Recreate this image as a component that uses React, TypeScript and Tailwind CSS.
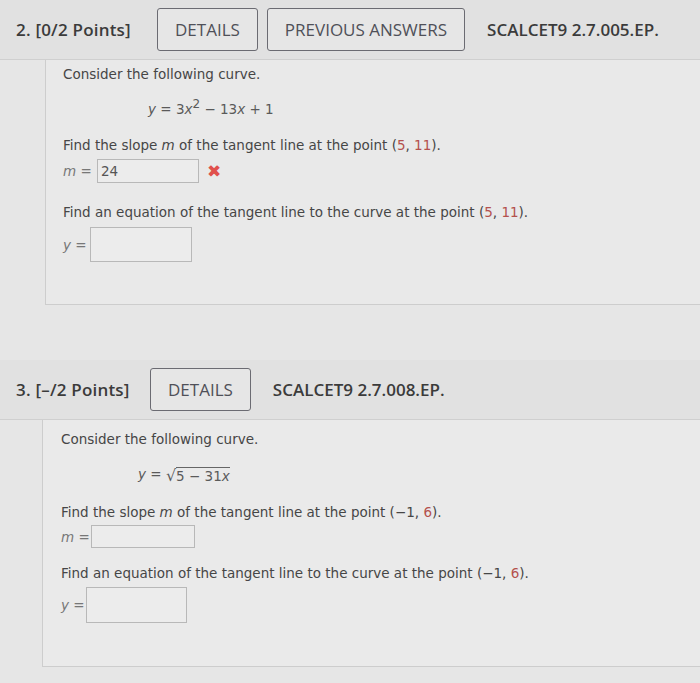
import React from "react";

const bodyFont = { fontFamily: '"DejaVu Sans", Verdana, sans-serif' };

function Pt({ a, b }: { a: string; b: string }) {
  return (
    <span>
      (<span className="text-[#b4514d]">{a}</span>, <span className="text-[#b4514d]">{b}</span>).
    </span>
  );
}

function Header({
  num,
  pts,
  buttons,
  code,
  labelW,
}: {
  num: string;
  pts: string;
  buttons: string[];
  code: string;
  labelW: string;
}) {
  return (
    <div className="flex items-center h-[60px] bg-[#e1e1e1] border-b border-[#cfcfcf] font-['Open_Sans',sans-serif] text-[#3b3b3b]">
      <div className={`pl-[16px] ${labelW} text-[17px] font-semibold tracking-[0.2px]`}>
        {num} {pts}
      </div>
      <div className="flex gap-[9px]">
        {buttons.map((b) => (
          <div
            key={b}
            className="h-[43px] px-[17px] flex items-center border-[1.5px] border-[#6b6b72] rounded-[3px] text-[17px] text-[#4f5058] bg-[#e6e6e6]"
          >
            {b}
          </div>
        ))}
      </div>
      <div className="ml-[22px] text-[17px] font-semibold">{code}</div>
    </div>
  );
}

export default function App() {
  return (
    <div className="w-[700px] h-[683px] bg-[#e6e6e6] overflow-hidden text-[#464646]">
      <Header
        num="2."
        pts="[0/2 Points]"
        buttons={["DETAILS", "PREVIOUS ANSWERS"]}
        code="SCALCET9 2.7.005.EP."
        labelW="w-[157px]"
      />

      <div
        className="ml-[45px] h-[245px] border-l border-b border-[#cdcdcd] bg-[#e9e9e9] pl-[17px] pt-[4px] text-[13.5px] leading-[20px]"
        style={bodyFont}
      >
        <p>Consider the following curve.</p>
        <p className="pl-[85px] mt-[15px] text-[#5a5a5a]">
          <i>y</i> = 3<i>x</i>
          <sup className="text-[12px]">2</sup> − 13<i>x</i> + 1
        </p>
        <p className="mt-[16px]">
          Find the slope <i>m</i> of the tangent line at the point <Pt a="5" b="11" />
        </p>
        <div className="flex items-center mt-[4px] h-[24px]">
          <span className="text-[#777] w-[34px]">
            <i>m</i> =
          </span>
          <div className="w-[102px] h-[24px] border border-[#b8b8b8] bg-[#ececec] pl-[3px] leading-[22px] text-[#555]">
            24
          </div>
          <span className="ml-[8px] text-[#e0504c] text-[17px] font-bold leading-none">✖</span>
        </div>
        <p className="mt-[19px]">
          Find an equation of the tangent line to the curve at the point <Pt a="5" b="11" />
        </p>
        <div className="flex items-center mt-[5px]">
          <span className="text-[#777] w-[27px]">
            <i>y</i> =
          </span>
          <div className="w-[102px] h-[35px] border border-[#b8b8b8] bg-[#ececec]" />
        </div>
      </div>

      <div className="h-[55px]" />

      <Header
        num="3."
        pts="[–/2 Points]"
        buttons={["DETAILS"]}
        code="SCALCET9 2.7.008.EP."
        labelW="w-[150px]"
      />

      <div
        className="ml-[42px] h-[247px] border-l border-b border-[#cdcdcd] bg-[#eaeaea] pl-[18px] pt-[9px] text-[13.5px] leading-[20px]"
        style={bodyFont}
      >
        <p>Consider the following curve.</p>
        <p className="pl-[77px] mt-[15px] text-[#5a5a5a] flex items-end">
          <i>y</i>&nbsp;=&nbsp;
          <span className="text-[16px] leading-none">√</span>
          <span className="border-t border-[#666] leading-[16px]">
            5 − 31<i>x</i>
          </span>
        </p>
        <p className="mt-[18px]">
          Find the slope <i>m</i> of the tangent line at the point (−1,{" "}
          <span className="text-[#b4514d]">6</span>).
        </p>
        <div className="flex items-center mt-[3px]">
          <span className="text-[#777] w-[30px]">
            <i>m</i> =
          </span>
          <div className="w-[104px] h-[23px] border border-[#b8b8b8] bg-[#ececec]" />
        </div>
        <p className="mt-[15px]">
          Find an equation of the tangent line to the curve at the point (−1,{" "}
          <span className="text-[#b4514d]">6</span>).
        </p>
        <div className="flex items-center mt-[4px]">
          <span className="text-[#777] w-[25px]">
            <i>y</i> =
          </span>
          <div className="w-[101px] h-[36px] border border-[#b8b8b8] bg-[#ececec]" />
        </div>
      </div>
    </div>
  );
}
